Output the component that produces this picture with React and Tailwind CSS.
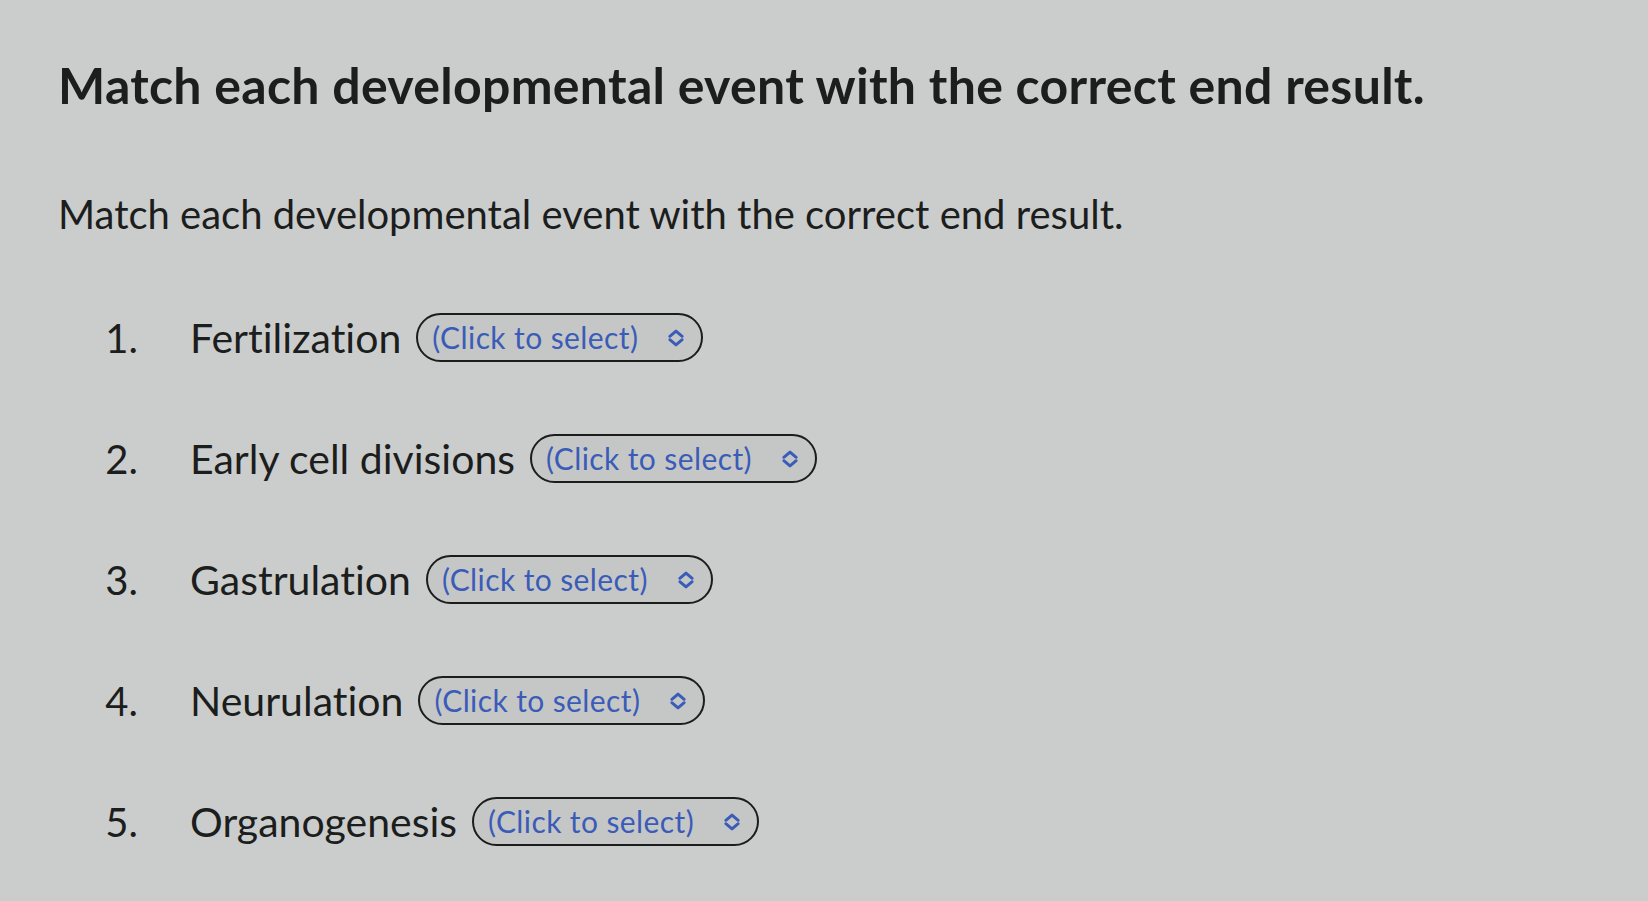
import { useState } from 'react';

const items = ['Fertilization', 'Early cell divisions', 'Gastrulation', 'Neurulation', 'Organogenesis'];

function UpDown() {
  return (
    <svg width="18" height="18" viewBox="0 0 16 16" fill="none" stroke="#3a5cb8" strokeWidth="2.6" strokeLinecap="round" strokeLinejoin="round">
      <path d="M2.5 6.5 L8 1.8 L13.5 6.5" />
      <path d="M2.5 9.5 L8 14.2 L13.5 9.5" />
    </svg>
  );
}

function SelectPill() {
  const [value] = useState('(Click to select)');
  return (
    <button className="flex items-center justify-between w-[287px] h-[49px] pl-[14px] pr-[16px] rounded-full border-2 border-[#1c1c1c] bg-[#c5c7c6] text-[#3a5cb8] text-[30px] leading-none tracking-[0.4px]">
      <span className="pb-[2px]">{value}</span>
      <UpDown />
    </button>
  );
}

export default function App() {
  return (
    <div className="min-h-screen w-full bg-[#cbcdcc] text-[#1c1d1d] font-['Lato','Liberation_Sans',sans-serif] [font-variant-ligatures:none] overflow-hidden">
      <div className="pl-[58px] pt-[60px]">
        <h1 className="text-[50px] font-bold leading-none tracking-[0.3px]">Match each developmental event with the correct end result.</h1>
        <p className="mt-[84px] text-[40px] leading-none">Match each developmental event with the correct end result.</p>

        <ol className="mt-[79px] flex flex-col gap-[72px]">
          {items.map((t, i) => (
            <li key={t} className="flex items-center">
              <span className="w-[80px] text-right text-[40px] leading-none">{i + 1}.</span>
              <span className="ml-[52px] text-[41px] leading-none">{t}</span>
              <span className="ml-[15px]">
                <SelectPill />
              </span>
            </li>
          ))}
        </ol>
      </div>
    </div>
  );
}
